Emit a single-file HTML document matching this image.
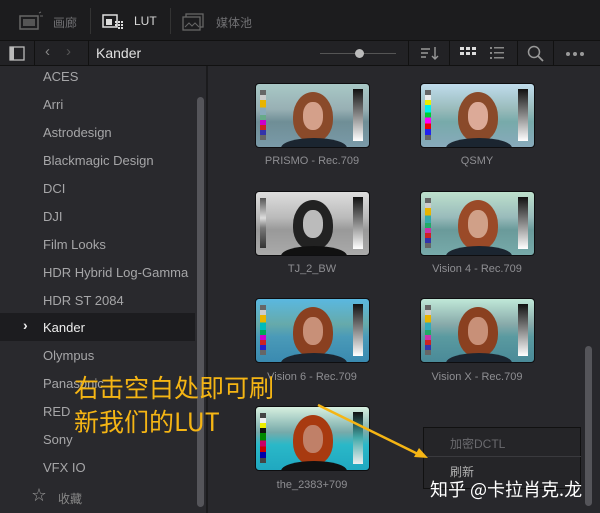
<!DOCTYPE html>
<html><head><meta charset="utf-8">
<style>
*{margin:0;padding:0;box-sizing:border-box}
body{width:600px;height:513px;overflow:hidden;background:#1b1b1d;font-family:"Liberation Sans","Noto Sans CJK SC",sans-serif;position:relative}
.abs{position:absolute}
.top{left:0;top:0;width:600px;height:40px;background:#1c1c1e}
.tb{left:0;top:40px;width:600px;height:26px;background:#222225;border-top:1px solid #111;border-bottom:1px solid #111}
.vs{position:absolute;width:1px;background:#111}
.side{left:0;top:66px;width:206px;height:447px;background:#29292d}
.main{left:208px;top:66px;width:392px;height:447px;background:#28282c}
.it{position:absolute;left:43px;font-size:13px;color:#a6a6a8;white-space:nowrap}
.thumb{position:absolute;width:115px;height:65px;border-radius:4px;border:1px solid #0e0e10;overflow:hidden}
.lbl{position:absolute;width:160px;text-align:center;font-size:11px;color:#8e8e92}
.bars{position:absolute;left:4px;top:6px;width:6px;height:50px}
.gb{position:absolute;right:6px;top:5px;width:10px;height:52px;background:linear-gradient(#111,#888 50%,#fff)}
.face{position:absolute;left:37px;top:8px;width:40px;height:50px;border-radius:50% 50% 45% 45%}
.skin{position:absolute;left:47px;top:18px;width:20px;height:28px;border-radius:45%}
.body{position:absolute;left:25px;top:54px;width:66px;height:20px;border-radius:50% 50% 0 0;background:#1b2530}
</style></head><body>
<div class="abs top">
 <svg class="abs" style="left:18px;top:11px" width="26" height="20"><rect x="2" y="5" width="18" height="13" fill="none" stroke="#666" stroke-width="1.5"/><rect x="5" y="8" width="12" height="7" fill="#555"/><path d="M21 2l2-1M22 5h3" stroke="#666"/></svg>
 <div class="abs" style="left:53px;top:14px;font-size:12px;color:#6f6f72">画廊</div>
 <div class="vs" style="left:90px;top:8px;height:26px;background:#333"></div>
 <svg class="abs" style="left:102px;top:13px" width="24" height="18"><rect x="1" y="2" width="14" height="12" fill="none" stroke="#ddd" stroke-width="1.5"/><rect x="4" y="6" width="6" height="6" fill="#ddd"/><g fill="#ddd"><rect x="13" y="8" width="2" height="2"/><rect x="16" y="8" width="2" height="2"/><rect x="19" y="8" width="2" height="2"/><rect x="13" y="11" width="2" height="2"/><rect x="16" y="11" width="2" height="2"/><rect x="19" y="11" width="2" height="2"/><rect x="16" y="14" width="2" height="2"/><rect x="19" y="14" width="2" height="2"/></g></svg>
 <div class="abs" style="left:134px;top:14px;font-size:12px;color:#d8d8d8">LUT</div>
 <div class="vs" style="left:170px;top:8px;height:26px;background:#333"></div>
 <svg class="abs" style="left:182px;top:12px" width="24" height="20"><rect x="4" y="2" width="17" height="13" fill="none" stroke="#666" stroke-width="1.3"/><rect x="1" y="5" width="17" height="13" fill="#1c1c1e" stroke="#666" stroke-width="1.3"/><path d="M3 15l4-4 3 3 3-3 4 4" stroke="#666" fill="none"/></svg>
 <div class="abs" style="left:216px;top:14px;font-size:12px;color:#6f6f72">媒体池</div>
</div>
<div class="abs tb">
 <svg class="abs" style="left:9px;top:5px" width="17" height="15"><rect x="1" y="1" width="14" height="13" fill="none" stroke="#bbb" stroke-width="1.3"/><rect x="1" y="1" width="4" height="13" fill="#bbb"/></svg>
 <div class="vs" style="left:34px;top:0;height:25px"></div>
 <div class="abs" style="left:45px;top:2px;font-size:15px;color:#888">&lsaquo;</div>
 <div class="abs" style="left:66px;top:2px;font-size:15px;color:#555">&rsaquo;</div>
 <div class="vs" style="left:88px;top:0;height:25px"></div>
 <div class="abs" style="left:96px;top:4px;font-size:14px;color:#e0e0e0">Kander</div>
 <div class="abs" style="left:320px;top:12px;width:76px;height:1px;background:#555"></div>
 <div class="abs" style="left:355px;top:8px;width:9px;height:9px;border-radius:50%;background:#bbb"></div>
 <div class="vs" style="left:408px;top:0;height:25px"></div>
 <svg class="abs" style="left:420px;top:4px" width="22" height="17"><path d="M1 4h9M1 8h7M1 12h5" stroke="#999" stroke-width="1.4"/><path d="M15 2v12M12 11l3 3 3-3" stroke="#999" stroke-width="1.4" fill="none"/></svg>
 <div class="vs" style="left:449px;top:0;height:25px"></div>
 <svg class="abs" style="left:460px;top:6px" width="16" height="13"><g fill="#ddd"><rect x="0" y="0" width="4" height="3"/><rect x="6" y="0" width="4" height="3"/><rect x="12" y="0" width="4" height="3"/><rect x="0" y="5" width="4" height="3"/><rect x="6" y="5" width="4" height="3"/><rect x="12" y="5" width="4" height="3"/></g></svg>
 <svg class="abs" style="left:490px;top:5px" width="16" height="14"><g fill="#888"><rect x="0" y="1" width="2" height="2"/><rect x="0" y="6" width="2" height="2"/><rect x="0" y="11" width="2" height="2"/><rect x="4" y="1" width="10" height="1.5"/><rect x="4" y="6" width="10" height="1.5"/><rect x="4" y="11" width="10" height="1.5"/></g></svg>
 <div class="vs" style="left:517px;top:0;height:25px"></div>
 <svg class="abs" style="left:527px;top:4px" width="18" height="18"><circle cx="7" cy="7" r="5.5" fill="none" stroke="#999" stroke-width="1.5"/><path d="M11 11l5 5" stroke="#999" stroke-width="1.8"/></svg>
 <div class="vs" style="left:553px;top:0;height:25px"></div>
 <svg class="abs" style="left:565px;top:10px" width="20" height="6"><circle cx="3" cy="3" r="2" fill="#999"/><circle cx="10" cy="3" r="2" fill="#999"/><circle cx="17" cy="3" r="2" fill="#999"/></svg>
</div>
<div class="abs side">
 <div class="abs" style="left:0;top:247px;width:195px;height:28px;background:#1c1c1f"></div>
 <div class="abs" style="left:197px;top:31px;width:7px;height:410px;border-radius:4px;background:#55555a"></div>
</div>
<div class="it" style="top:69px">ACES</div>
<div class="it" style="top:97px">Arri</div>
<div class="it" style="top:125px">Astrodesign</div>
<div class="it" style="top:153px">Blackmagic Design</div>
<div class="it" style="top:181px">DCI</div>
<div class="it" style="top:209px">DJI</div>
<div class="it" style="top:237px">Film Looks</div>
<div class="it" style="top:265px">HDR Hybrid Log-Gamma</div>
<div class="it" style="top:293px">HDR ST 2084</div>
<div class="it" style="top:320px;color:#eee">Kander</div>
<div class="abs" style="left:23px;top:317px;font-size:14px;color:#eee;font-weight:bold">&rsaquo;</div>
<div class="it" style="top:348px">Olympus</div>
<div class="it" style="top:376px">Panasonic</div>
<div class="it" style="top:404px">RED</div>
<div class="it" style="top:432px">Sony</div>
<div class="it" style="top:460px">VFX IO</div>
<div class="abs" style="left:32px;top:485px;font-size:14px;color:#999">☆</div>
<div class="it" style="left:58px;top:490px;font-size:12px;color:#888">收藏</div>
<div class="abs main">
 <div class="abs" style="left:377px;top:280px;width:7px;height:160px;border-radius:4px;background:#55555a"></div>
</div>

<!-- thumbs -->
<div class="thumb" style="left:255px;top:83px;background:linear-gradient(#a8c8c6,#98b0b4 40%,#6f8e96 60%,#7a9aa8)"><div class="bars" style="background:linear-gradient(#666 0 10%,#ccc 10% 20%,#e8b400 20% 35%,#8ab 35% 50%,#6a8 50% 60%,#c0c 60% 70%,#c22 70% 80%,#33a 80% 90%,#666 90%)"></div><div class="gb"></div><div class="face" style="background:#8a4a2a"></div><div class="skin" style="background:#d4a08a"></div><div class="body"></div></div>
<div class="lbl" style="left:232px;top:155px">PRISMO - Rec.709</div>
<div class="thumb" style="left:420px;top:83px;background:linear-gradient(#c0dcec,#9bb 40%,#7aa 60%,#8ab)"><div class="bars" style="background:linear-gradient(#666 0 10%,#eee 10% 20%,#ee0 20% 30%,#0ee 30% 45%,#0c3 45% 55%,#f0f 55% 67%,#e00 67% 78%,#22e 78% 90%,#666 90%)"></div><div class="gb"></div><div class="face" style="background:#8a4a2a"></div><div class="skin" style="background:#dcaa98"></div><div class="body"></div></div>
<div class="lbl" style="left:397px;top:155px">QSMY</div>

<div class="thumb" style="left:255px;top:191px;background:linear-gradient(#ddd,#bbb 40%,#999 60%,#aaa)"><div class="bars" style="background:linear-gradient(#555,#ddd 40%,#777 60%,#333)"></div><div class="gb"></div><div class="face" style="background:#222"></div><div class="skin" style="background:#bbb"></div><div class="body" style="background:#111"></div></div>
<div class="lbl" style="left:232px;top:263px">TJ_2_BW</div>
<div class="thumb" style="left:420px;top:191px;background:linear-gradient(#bde0cc,#9bb 40%,#6a9a9a 60%,#7aa)"><div class="bars" style="background:linear-gradient(#666 0 10%,#ccc 10% 20%,#e8b400 20% 35%,#3aa 35% 50%,#2a6 50% 60%,#c3a 60% 70%,#c22 70% 80%,#33a 80% 90%,#666 90%)"></div><div class="gb"></div><div class="face" style="background:#9a4a28"></div><div class="skin" style="background:#d0a088"></div><div class="body"></div></div>
<div class="lbl" style="left:397px;top:263px">Vision 4 - Rec.709</div>

<div class="thumb" style="left:255px;top:298px;background:linear-gradient(#5ab8e0,#6aa 40%,#4a9ab8 60%,#3a8ab0)"><div class="bars" style="background:linear-gradient(#666 0 10%,#ccc 10% 20%,#e8b400 20% 35%,#0bb 35% 50%,#0a5 50% 60%,#c0c 60% 70%,#c22 70% 80%,#22c 80% 90%,#666 90%)"></div><div class="gb"></div><div class="face" style="background:#8a4020"></div><div class="skin" style="background:#c89078"></div><div class="body"></div></div>
<div class="lbl" style="left:232px;top:371px">Vision 6 - Rec.709</div>
<div class="thumb" style="left:420px;top:298px;background:linear-gradient(#c0e8d8,#8aa 40%,#5a9aa0 60%,#4a8a98)"><div class="bars" style="background:linear-gradient(#666 0 10%,#ccc 10% 20%,#e8b400 20% 35%,#3ab 35% 50%,#2a6 50% 60%,#c3a 60% 70%,#c22 70% 80%,#33a 80% 90%,#666 90%)"></div><div class="gb"></div><div class="face" style="background:#8a4020"></div><div class="skin" style="background:#c89078"></div><div class="body"></div></div>
<div class="lbl" style="left:397px;top:371px">Vision X - Rec.709</div>

<div class="thumb" style="left:255px;top:406px;background:linear-gradient(#d8f0e0,#7aa 40%,#2ab8c8 60%,#20a8c0)"><div class="bars" style="background:linear-gradient(#444 0 10%,#eee 10% 20%,#ee0 20% 30%,#111 30% 40%,#080 40% 55%,#c06 55% 67%,#c00 67% 78%,#00a 78% 90%,#444 90%)"></div><div class="gb" style="background:linear-gradient(#111,#4aa 50%,#eee)"></div><div class="face" style="background:#a83a10"></div><div class="skin" style="background:#c08068"></div><div class="body" style="background:#111"></div></div>
<div class="lbl" style="left:232px;top:479px">the_2383+709</div>

<!-- context menu -->
<div class="abs" style="left:423px;top:427px;width:158px;height:62px;background:#252528;border:1px solid #111"></div>
<div class="abs" style="left:424px;top:456px;width:157px;height:1px;background:#3a3a3e"></div>
<div class="abs" style="left:450px;top:435px;font-size:12px;color:#6a6a6e">加密DCTL</div>
<div class="abs" style="left:450px;top:463px;font-size:12px;color:#b0b0b0">刷新</div>

<!-- annotation -->
<div class="abs" style="left:74px;top:370px;font-size:25px;line-height:34px;color:#f5b514;font-family:'Noto Sans CJK SC','Liberation Sans',sans-serif">右击空白处即可刷<br>新我们的LUT</div>
<svg class="abs" style="left:0;top:0" width="600" height="513"><path d="M318 405L422 456" stroke="#f5b514" stroke-width="2.5"/><path d="M428 458l-14-1 5-9z" fill="#f5b514"/></svg>
<div class="abs" style="left:430px;top:476px;font-size:18px;color:#fff;font-family:'Noto Sans CJK SC','Liberation Sans',sans-serif">知乎 @卡拉肖克.龙</div>
</body></html>
